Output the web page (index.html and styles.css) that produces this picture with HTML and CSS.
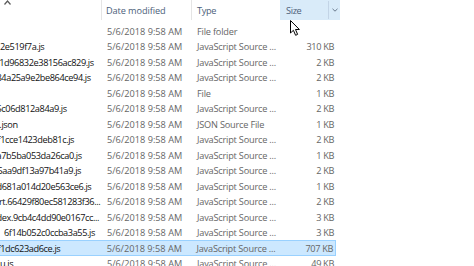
FILE: index.html
```html
<!DOCTYPE html>
<html>
<head>
<meta charset="utf-8">
<link rel="stylesheet" href="styles.css">
</head>
<body>
<div class="view">
  <div class="header">
    <div class="hcell hname">
      <svg class="sortcaret" width="7" height="5" viewBox="0 0 7 5"><path d="M0.5 4.5 L3.5 1 L6.5 4.5" fill="none" stroke="#5a5a5a" stroke-width="1.2"/></svg>
    </div>
    <div class="hcell hdate">Date modified</div>
    <div class="hcell htype">Type</div>
    <div class="hcell hsize">
      <span class="hsize-label">Size</span>
      <span class="hsize-drop"><svg width="6" height="4" viewBox="0 0 6 4"><path d="M0.5 0.8 L3 3.2 L5.5 0.8" fill="none" stroke="#6a7a8c" stroke-width="1"/></svg></span>
    </div>
  </div>
  <div class="rows">
    <div class="row"><div class="cname"></div><div class="cdate">5/6/2018 9:58 AM</div><div class="ctype">File folder</div><div class="csize"></div></div>
    <div class="row"><div class="cname"><span>2e519f7a.js</span></div><div class="cdate">5/6/2018 9:58 AM</div><div class="ctype">JavaScript Source ...</div><div class="csize">310 KB</div></div>
    <div class="row"><div class="cname"><span class="cut3">f1d96832e38156ac829.js</span></div><div class="cdate">5/6/2018 9:58 AM</div><div class="ctype">JavaScript Source ...</div><div class="csize">2 KB</div></div>
    <div class="row"><div class="cname"><span class="cut3">84a25a9e2be864ce94.js</span></div><div class="cdate">5/6/2018 9:58 AM</div><div class="ctype">JavaScript Source ...</div><div class="csize">2 KB</div></div>
    <div class="row"><div class="cname"></div><div class="cdate">5/6/2018 9:58 AM</div><div class="ctype">File</div><div class="csize">1 KB</div></div>
    <div class="row"><div class="cname"><span class="cut3">5c06d812a84a9.js</span></div><div class="cdate">5/6/2018 9:58 AM</div><div class="ctype">JavaScript Source ...</div><div class="csize">2 KB</div></div>
    <div class="row"><div class="cname"><span class="cut3">t.json</span></div><div class="cdate">5/6/2018 9:58 AM</div><div class="ctype">JSON Source File</div><div class="csize">1 KB</div></div>
    <div class="row"><div class="cname"><span class="cut2">f1cce1423deb81c.js</span></div><div class="cdate">5/6/2018 9:58 AM</div><div class="ctype">JavaScript Source ...</div><div class="csize">2 KB</div></div>
    <div class="row"><div class="cname"><span class="cut3">a7b5ba053da26ca0.js</span></div><div class="cdate">5/6/2018 9:58 AM</div><div class="ctype">JavaScript Source ...</div><div class="csize">1 KB</div></div>
    <div class="row"><div class="cname"><span class="cut2">5aa9df13a97b41a9.js</span></div><div class="cdate">5/6/2018 9:58 AM</div><div class="ctype">JavaScript Source ...</div><div class="csize">2 KB</div></div>
    <div class="row"><div class="cname"><span class="cut3">d681a014d20e563ce6.js</span></div><div class="cdate">5/6/2018 9:58 AM</div><div class="ctype">JavaScript Source ...</div><div class="csize">1 KB</div></div>
    <div class="row"><div class="cname"><span class="cut1">rt.66429f80ec581283f36...</span></div><div class="cdate">5/6/2018 9:58 AM</div><div class="ctype">JavaScript Source ...</div><div class="csize">2 KB</div></div>
    <div class="row"><div class="cname"><span class="cut3">dex.9cb4c4dd90e0167cc...</span></div><div class="cdate">5/6/2018 9:58 AM</div><div class="ctype">JavaScript Source ...</div><div class="csize">3 KB</div></div>
    <div class="row"><div class="cname"><span class="ind4">6f14b052c0ccba3a55.js</span></div><div class="cdate">5/6/2018 9:58 AM</div><div class="ctype">JavaScript Source ...</div><div class="csize">3 KB</div></div>
    <div class="row selected"><div class="cname"><span class="cut2">f1dc623ad6ce.js</span></div><div class="cdate">5/6/2018 9:58 AM</div><div class="ctype">JavaScript Source ...</div><div class="csize">707 KB</div></div>
    <div class="row"><div class="cname"><span>u.js</span></div><div class="cdate">5/6/2018 9:58 AM</div><div class="ctype">JavaScript Source ...</div><div class="csize">49 KB</div></div>
  </div>
  <svg class="cursor" width="12" height="17" viewBox="0 0 12 17"><path d="M0.5 0.5 L0.5 13 L3.4 10.3 L5.6 15.3 L7.6 14.4 L5.5 9.5 L9.4 9.5 Z" fill="#ffffff" stroke="#000000" stroke-width="1" stroke-linejoin="round"/></svg>
</div>
</body>
</html>
```

FILE: styles.css
```css
html, body {
  margin: 0;
  padding: 0;
  background: #ffffff;
}
body {
  width: 474px;
  height: 266px;
  overflow: hidden;
  font-family: "Open Sans", "Noto Sans", sans-serif;
  font-size: 9.2px;
  letter-spacing: -0.35px;
}
.view {
  position: relative;
  width: 474px;
  height: 266px;
  overflow: hidden;
}
.header {
  display: flex;
  height: 20px;
  color: #4c607a;
}
.hcell {
  display: flex;
  align-items: center;
  box-sizing: border-box;
  height: 20px;
}
.hname {
  width: 102px;
  border-right: 1px solid #e5e5e5;
  align-items: flex-start;
  padding-left: 4px;
}
.sortcaret {
  display: block;
}
.hdate {
  width: 90px;
  padding-left: 4px;
  border-right: 1px solid #e5e5e5;
  letter-spacing: -0.1px;
}
.htype {
  width: 88px;
  padding-left: 5px;
}
.hsize {
  width: 60px;
  background: #d9ebf9;
  padding-left: 6px;
  align-items: stretch;
}
.hsize-label {
  flex: 1;
  display: flex;
  align-items: center;
}
.hsize-drop {
  width: 11px;
  border-left: 1px solid #c3d4e6;
  display: flex;
  align-items: center;
  justify-content: center;
  margin: 1px 0;
}
.hsize-drop svg {
  display: block;
}
.rows {
  padding-top: 3.25px;
}
.row {
  display: flex;
  align-items: center;
  width: 336px;
  height: 15.5px;
  box-sizing: border-box;
  color: #666666;
  white-space: nowrap;
  line-height: 15px;
}
.row.selected {
  background: #cce8ff;
  border: 1px solid #99d1ff;
  border-left: none;
}
.cname {
  width: 102px;
  overflow: hidden;
  color: #111111;
  letter-spacing: -0.4px;
}
.cname span {
  display: block;
}
.cut1 { margin-left: -1px; }
.cut2 { margin-left: -2.5px; }
.cut3 { margin-left: -3.5px; }
.ind4 { margin-left: 4px; }
.cdate {
  width: 90px;
  padding-left: 5px;
  box-sizing: border-box;
  letter-spacing: 0px;
}
.ctype {
  width: 88px;
  padding-left: 5px;
  box-sizing: border-box;
  overflow: hidden;
  letter-spacing: -0.2px;
}
.csize {
  width: 56px;
  text-align: right;
  padding-right: 2px;
  box-sizing: border-box;
}
.cursor {
  position: absolute;
  left: 290px;
  top: 20px;
}
```
